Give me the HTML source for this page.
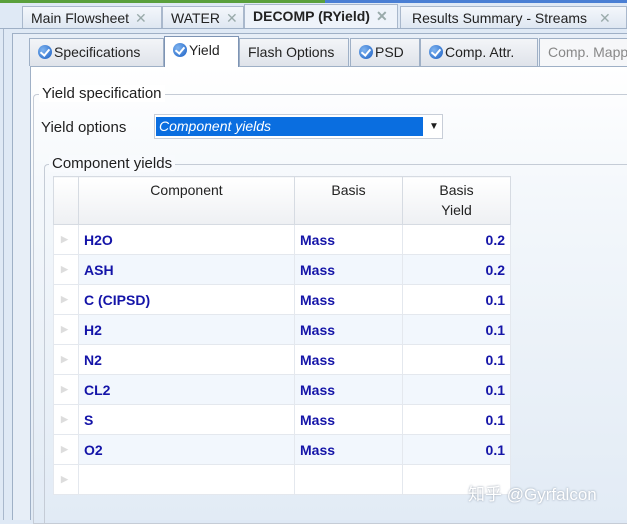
<!DOCTYPE html><html><head><style>
*{margin:0;padding:0;box-sizing:border-box}
body{width:627px;height:520px;overflow:hidden;position:relative;background:#dfe9f5;font-family:"Liberation Sans",sans-serif;font-size:14px;color:#1e1e1e}
.a{position:absolute}
.tab{position:absolute;top:6px;height:23px;border:1px solid #a9b8cc;border-bottom:none;background:linear-gradient(#f4f7fb,#dde6f1);padding:3px 0 0 8px;font-size:14px;color:#222;white-space:nowrap;overflow:hidden}
.x{color:#9aa;margin-left:6px}
.it{position:absolute;top:38px;height:28px;border:1px solid #9fb0c6;border-bottom:none;background:linear-gradient(#f3f5f8,#dfe3ea);padding:5px 0 0 8px;font-size:14px;color:#222;white-space:nowrap;overflow:hidden}
.ck{display:inline-block;width:14px;height:14px;border-radius:50%;background:radial-gradient(circle at 35% 35%,#7fb4f0,#1a5fc4);vertical-align:-2px;margin-right:2px;position:relative}
.ck:after{content:"";position:absolute;left:4px;top:2px;width:4px;height:7px;border:solid #fff;border-width:0 2px 2px 0;transform:rotate(40deg)}
table{border-collapse:collapse;position:absolute;left:53px;top:176px;background:#fff}
td{border:1px solid #e4e8ee;height:30px;font-weight:bold;color:#1414a8;font-size:14px;padding:0 5px}
tr:nth-child(odd) td{background:#f2f7fd}
th{height:48px;font-weight:normal;font-size:14px;color:#222;background:linear-gradient(#fff,#eef0f3);border:1px solid #d6dbe2;vertical-align:top;padding-top:3px;line-height:20px}
td.rh{background:#fff!important;width:25px;color:#ddd;font-size:9px;padding-left:7px}
</style></head><body>
<div class="a" style="left:0;top:0;width:325px;height:3px;background:#5aa03c"></div>
<div class="a" style="left:325px;top:0;width:302px;height:3px;background:#4a7fd4"></div>
<div class="tab" style="left:22px;width:140px">Main Flowsheet<span class="x">✕</span></div>
<div class="tab" style="left:162px;width:82px">WATER<span class="x">✕</span></div>
<div class="tab" style="left:244px;width:154px;top:4px;height:25px;background:#eef3fa;font-weight:bold">DECOMP (RYield)<span class="x">✕</span></div>
<div class="tab" style="left:400px;width:227px;padding-left:11px">Results Summary - Streams<span class="x" style="margin-left:12px">✕</span></div>
<div class="a" style="left:0;top:28px;width:627px;height:1px;background:#9fb0c6"></div>
<div class="a" style="left:3px;top:29px;width:1px;height:491px;background:#a9b8cc"></div>
<div class="a" style="left:12px;top:33px;width:615px;height:487px;border:1px solid #9fb0c6;border-right:none;border-bottom:none;background:#e7eef7"></div>
<div class="a" style="left:30px;top:66px;width:597px;height:454px;border-left:1px solid #9fb0c6;border-top:1px solid #9fb0c6;background:linear-gradient(#fff 0%,#f3f7fb 30%,#e2ebf5 100%)"></div>
<div class="it" style="left:29px;width:135px"><span class="ck"></span>Specifications</div>
<div class="it" style="left:164px;width:75px;top:36px;height:31px;background:#fff;border-color:#7e94b4"><span class="ck"></span>Yield</div>
<div class="it" style="left:239px;width:110px">Flash Options</div>
<div class="it" style="left:350px;width:70px"><span class="ck"></span>PSD</div>
<div class="it" style="left:420px;width:118px"><span class="ck"></span>Comp. Attr.</div>
<div class="it" style="left:539px;width:90px;color:#888;background:#f6f7f9">Comp. Mapping</div>
<div class="a" style="left:33px;top:94px;width:600px;height:430px;border:1px solid #c5ccd6;border-right:none;border-radius:4px 0 0 0"></div>
<div class="a" style="left:39px;top:85px;background:#fff;padding:0 3px;font-size:15px">Yield specification</div>
<div class="a" style="left:41px;top:119px;font-size:15px">Yield options</div>
<div class="a" style="left:154px;top:114px;width:289px;height:25px;border:1px solid #c8ced8;background:#fff"></div>
<div class="a" style="left:156px;top:117px;width:267px;height:19px;background:#0a6ee0;color:#fff;font-style:italic;padding:1px 3px;font-size:14px">Component yields</div>
<div class="a" style="left:429px;top:121px;font-size:10px">▼</div>
<div class="a" style="left:44px;top:164px;width:590px;height:360px;border:1px solid #c5ccd6;border-right:none;border-radius:4px 0 0 0"></div>
<div class="a" style="left:49px;top:155px;background:#f8fafd;padding:0 3px;font-size:15px">Component yields</div>
<table>
<tr><th style="width:25px"></th><th style="width:216px">Component</th><th style="width:108px">Basis</th><th style="width:108px">Basis<br>Yield</th></tr>
<tr><td class="rh">▶</td><td>H2O</td><td>Mass</td><td style="text-align:right">0.2</td></tr>
<tr><td class="rh">▶</td><td>ASH</td><td>Mass</td><td style="text-align:right">0.2</td></tr>
<tr><td class="rh">▶</td><td>C (CIPSD)</td><td>Mass</td><td style="text-align:right">0.1</td></tr>
<tr><td class="rh">▶</td><td>H2</td><td>Mass</td><td style="text-align:right">0.1</td></tr>
<tr><td class="rh">▶</td><td>N2</td><td>Mass</td><td style="text-align:right">0.1</td></tr>
<tr><td class="rh">▶</td><td>CL2</td><td>Mass</td><td style="text-align:right">0.1</td></tr>
<tr><td class="rh">▶</td><td>S</td><td>Mass</td><td style="text-align:right">0.1</td></tr>
<tr><td class="rh">▶</td><td>O2</td><td>Mass</td><td style="text-align:right">0.1</td></tr>
<tr><td class="rh">▶</td><td style="background:#fff"></td><td style="background:#fff"></td><td style="background:#fff"></td></tr>
</table>
<div class="a" style="left:468px;top:480px;font-size:17px;color:#fff;text-shadow:0 0 2px #8a96a6;font-family:'Liberation Sans','Noto Sans CJK SC',sans-serif">知乎 @Gyrfalcon</div>
</body></html>
